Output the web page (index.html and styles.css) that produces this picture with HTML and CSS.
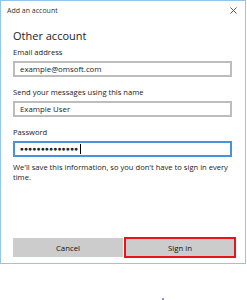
FILE: index.html
```html
<!DOCTYPE html>
<html>
<head>
    <link rel="stylesheet" href="styles.css">
</head>
<body>
    <div class="window">
        <div class="titlebar">
            <span class="title">Add an account</span>
            <svg class="close" width="7" height="7" viewBox="0 0 7 7">
                <path d="M0.5 0.5 L6.5 6.5 M6.5 0.5 L0.5 6.5" stroke="#555" stroke-width="1"/>
            </svg>
        </div>
        <div class="content">
            <h1 class="heading">Other account</h1>
            <div class="label">Email address</div>
            <div class="field">example@omsoft.com</div>
            <div class="label">Send your messages using this name</div>
            <div class="field">Example User</div>
            <div class="label">Password</div>
            <div class="field field-active">
                <span class="dots">&#9679;&#9679;&#9679;&#9679;&#9679;&#9679;&#9679;&#9679;&#9679;&#9679;&#9679;&#9679;&#9679;&#9679;</span><span class="caret"></span>
            </div>
            <p class="note">We'll save this information, so you don't have to sign in every time.</p>
        </div>
        <div class="buttons">
            <div class="btn">Cancel</div>
            <div class="btn btn-marked">Sign in</div>
        </div>
    </div>
    <div class="dot"></div>
</body>
</html>
```
FILE: styles.css
```css
/* page */
body {
    margin: 0;
    background: #fff;
    font-family: "Open Sans", "Noto Sans", sans-serif;
    color: #222;
}

/* dialog window */
.window {
    width: 246px;
    height: 264px;
    box-sizing: border-box;
    border: 1px solid #93c6ee;
    display: flex;
    flex-direction: column;
}

.titlebar {
    height: 18px;
    display: flex;
    align-items: center;
    justify-content: space-between;
    padding: 0 8px 2px 6px;
}

.title {
    font-size: 7px;
    color: #333;
}

.close {
    display: block;
}

.content {
    flex: 1;
    padding: 0 13px 0 12px;
}

.heading {
    margin: 8px 0 0;
    font-size: 11px;
    font-weight: 400;
    line-height: 14px;
}

.label {
    font-size: 7.6px;
    line-height: 10px;
    margin-top: 4px;
}

/* text inputs */
.field {
    height: 16px;
    box-sizing: border-box;
    border: 2px solid #bdbdbd;
    margin: 4px 0 10px;
    padding: 0 5px;
    font-size: 7.8px;
    line-height: 12px;
    display: flex;
    align-items: center;
}

.field-active {
    border-color: #4a92dc;
    margin-bottom: 5px;
}

.dots {
    font-size: 6.6px;
    letter-spacing: 0.2px;
}

.caret {
    width: 1px;
    height: 10px;
    background: #000;
    margin-left: 1px;
}

.note {
    margin: 0;
    font-size: 7.6px;
    line-height: 10px;
}

/* bottom buttons */
.buttons {
    display: flex;
    padding: 0 10px 6px 12px;
}

.btn {
    flex: 1;
    height: 19px;
    background: #ccc;
    font-size: 7.8px;
    color: #111;
    display: flex;
    align-items: center;
    justify-content: center;
}

.btn-marked {
    outline: 2px solid #e8141c;
    outline-offset: -1px;
    margin-left: 2px;
}

.dot {
    width: 2px;
    height: 2px;
    background: #9a8fe0;
    margin: 34px 0 0 162px;
}
```
